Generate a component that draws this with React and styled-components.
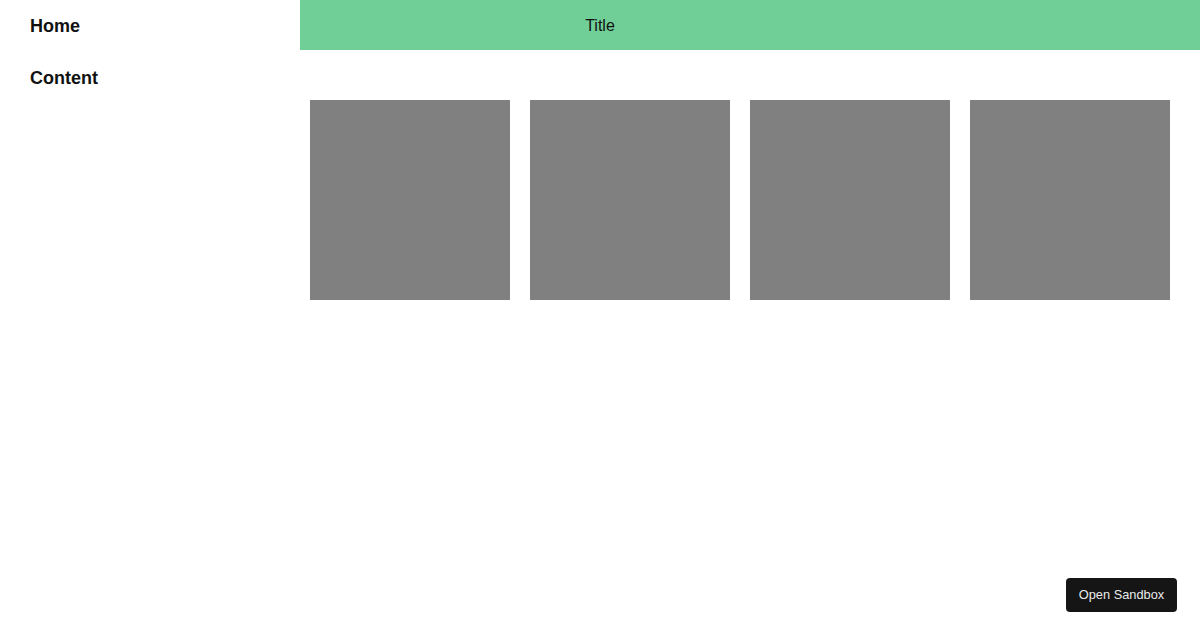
import React from "react";
import styled, { createGlobalStyle } from "styled-components";

const Global = createGlobalStyle`
  html, body { margin: 0; padding: 0; background: #fff; }
  body { font-family: "Liberation Sans", Arial, sans-serif; color: #111; }
`;

const Layout = styled.div`
  display: grid;
  grid-template-columns: 300px 1fr;
  width: 1200px;
  height: 630px;
`;

const Sidebar = styled.nav`
  display: flex;
  flex-direction: column;
  gap: 2px;
  padding: 1px 0 0 30px;
`;

const NavItem = styled.div`
  height: 50px;
  line-height: 50px;
  font-size: 18px;
  font-weight: 700;
  color: #111;
`;

const Main = styled.main`
  display: flex;
  flex-direction: column;
`;

const Header = styled.header`
  box-sizing: border-box;
  height: 50px;
  background: #70cf97;
  display: flex;
  align-items: center;
  justify-content: center;
  padding: 2px 300px 0 0;
  font-size: 16px;
  color: #111;
`;

const Cards = styled.div`
  display: grid;
  grid-template-columns: repeat(4, 200px);
  gap: 20px;
  padding: 50px 10px;
`;

const Card = styled.div`
  width: 200px;
  height: 200px;
  background: #808080;
`;

const SandboxButton = styled.button`
  position: fixed;
  right: 23px;
  bottom: 18px;
  box-sizing: border-box;
  width: 111px;
  height: 34px;
  border: none;
  border-radius: 4px;
  background: #151515;
  color: #eaeaea;
  font-family: "Liberation Sans", Arial, sans-serif;
  font-size: 12.8px;
  padding: 0 0 2px 0;
`;

export default function App() {
  return (
    <>
      <Global />
      <Layout>
        <Sidebar>
          <NavItem>Home</NavItem>
          <NavItem>Content</NavItem>
        </Sidebar>
        <Main>
          <Header>Title</Header>
          <Cards>
            {[0, 1, 2, 3].map((i) => (
              <Card key={i} />
            ))}
          </Cards>
        </Main>
      </Layout>
      <SandboxButton>Open Sandbox</SandboxButton>
    </>
  );
}
